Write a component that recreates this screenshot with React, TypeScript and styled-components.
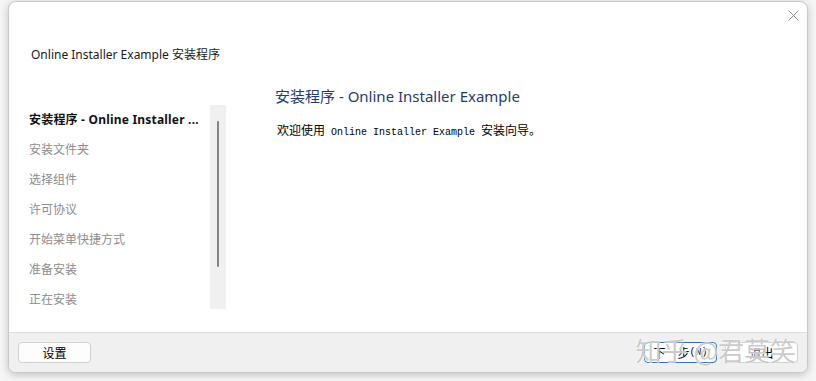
import React from "react"
import styled, { createGlobalStyle } from "styled-components"

const GlobalStyle = createGlobalStyle`
  html, body {
    margin: 0;
    padding: 0;
    background: #f6f6f6;
  }
  body {
    font-family: 'Noto Sans', 'Noto Sans CJK SC', sans-serif;
  }
`

// first entry is shown elided, the way the installer draws it
const steps = [
  "安装程序 - Online Installer ...",
  "安装文件夹",
  "选择组件",
  "许可协议",
  "开始菜单快捷方式",
  "准备安装",
  "正在安装",
]

const App = () => {
  return (
    <Page>
      <GlobalStyle />
      <Window>
        <CloseButton aria-label="close">
          <svg width="11" height="11" viewBox="0 0 11 11">
            <path d="M0.5 0.5 L10.5 10.5 M10.5 0.5 L0.5 10.5" stroke="#8a8a8a" strokeWidth="1" fill="none" />
          </svg>
        </CloseButton>
        <TitleBar>Online Installer Example 安装程序</TitleBar>
        <Main>
          <Sidebar>
            <StepList>
              {steps.map((s, i) => (
                <Step key={s} active={i === 0}>{s}</Step>
              ))}
            </StepList>
            <ScrollTrack>
              <ScrollThumb />
            </ScrollTrack>
          </Sidebar>
          <Content>
            <PageTitle>安装程序 - Online Installer Example</PageTitle>
            <Welcome>
              欢迎使用<Mono> Online Installer Example </Mono>安装向导。
            </Welcome>
          </Content>
        </Main>
        <Footer>
          <Button>设置</Button>
          <Spacer />
          <Button focused>下一步<Mono>(N)</Mono></Button>
          <Button>退出</Button>
          <Watermark>知乎 @君莫笑</Watermark>
        </Footer>
      </Window>
    </Page>
  )
}

const Page = styled.div`
  width: 816px;
  height: 381px;
  box-sizing: border-box;
  padding: 1px 8px 0 8px;
  overflow: hidden;
`

const Window = styled.div`
  position: relative;
  width: 800px;
  height: 372px;
  box-sizing: border-box;
  background: #ffffff;
  border: 1px solid #c9c9c9;
  border-radius: 8px;
  box-shadow: 0 2px 8px rgba(0, 0, 0, 0.22);
  display: flex;
  flex-direction: column;
  overflow: hidden;
`

const CloseButton = styled.div`
  position: absolute;
  top: 8px;
  right: 8px;
  width: 11px;
  height: 11px;
  display: flex;
`

const TitleBar = styled.div`
  height: 79px;
  box-sizing: border-box;
  padding: 44px 0 0 22px;
  font-size: 12px;
  line-height: 17px;
  color: #1a1a1a;
`

const Main = styled.div`
  flex: 1;
  display: flex;
`

const Sidebar = styled.div`
  width: 217px;
  box-sizing: border-box;
  padding: 24px 0 0 20px;
  display: flex;
  align-items: flex-start;
`

const StepList = styled.div`
  width: 181px;
  height: 204px;
  overflow: hidden;
  display: flex;
  flex-direction: column;
`

const Step = styled.div<{ active?: boolean }>`
  height: 30px;
  flex-shrink: 0;
  font-size: 12px;
  line-height: 30px;
  font-weight: ${({ active }) => (active ? 700 : 400)};
  letter-spacing: ${({ active }) => (active ? "0.2px" : "0")};
  color: ${({ active }) => (active ? "#111111" : "#8c8c8c")};
  white-space: nowrap;
`

const ScrollTrack = styled.div`
  width: 16px;
  height: 204px;
  background: #f0f0f0;
  display: flex;
  justify-content: center;
  padding-top: 16px;
  box-sizing: border-box;
`

const ScrollThumb = styled.div`
  width: 2px;
  height: 146px;
  border-radius: 1px;
  background: #858585;
`

const Content = styled.div`
  flex: 1;
  padding: 4px 0 0 49px;
`

const PageTitle = styled.div`
  font-size: 15px;
  line-height: 22px;
  color: #1f3c6e;
`

const Welcome = styled.div`
  margin-top: 15px;
  font-size: 12px;
  line-height: 16px;
  color: #000000;
  font-family: 'Noto Sans CJK SC', 'Noto Sans', sans-serif;
  padding-left: 2px;
  white-space: pre;
`

const Mono = styled.span`
  font-family: 'Liberation Mono', monospace;
  font-size: 10px;
`

const Footer = styled.div`
  position: relative;
  height: 40px;
  box-sizing: border-box;
  border-top: 1px solid #dcdcdc;
  background: #f0f0f0;
  display: flex;
  align-items: center;
  gap: 8px;
  padding: 0 9px 1px 9px;
`

const Spacer = styled.div`
  flex: 1;
`

const Button = styled.div<{ focused?: boolean }>`
  width: 73px;
  height: 21px;
  box-sizing: border-box;
  background: #fdfdfd;
  border: 1px solid ${({ focused }) => (focused ? "#2f6fb3" : "#d0d0d0")};
  border-radius: 4px;
  display: flex;
  align-items: center;
  justify-content: center;
  font-family: 'Noto Sans CJK SC', sans-serif;
  font-size: 12px;
  color: #000000;
`

const Watermark = styled.div`
  position: absolute;
  right: 11px;
  top: 0px;
  font-family: 'Noto Sans CJK SC', sans-serif;
  font-size: 26px;
  line-height: 34px;
  color: rgba(150, 150, 150, 0.5);
  text-shadow: 0 0 1px #ffffff, 0 0 2px #ffffff;
  pointer-events: none;
  white-space: nowrap;
`

export default App
